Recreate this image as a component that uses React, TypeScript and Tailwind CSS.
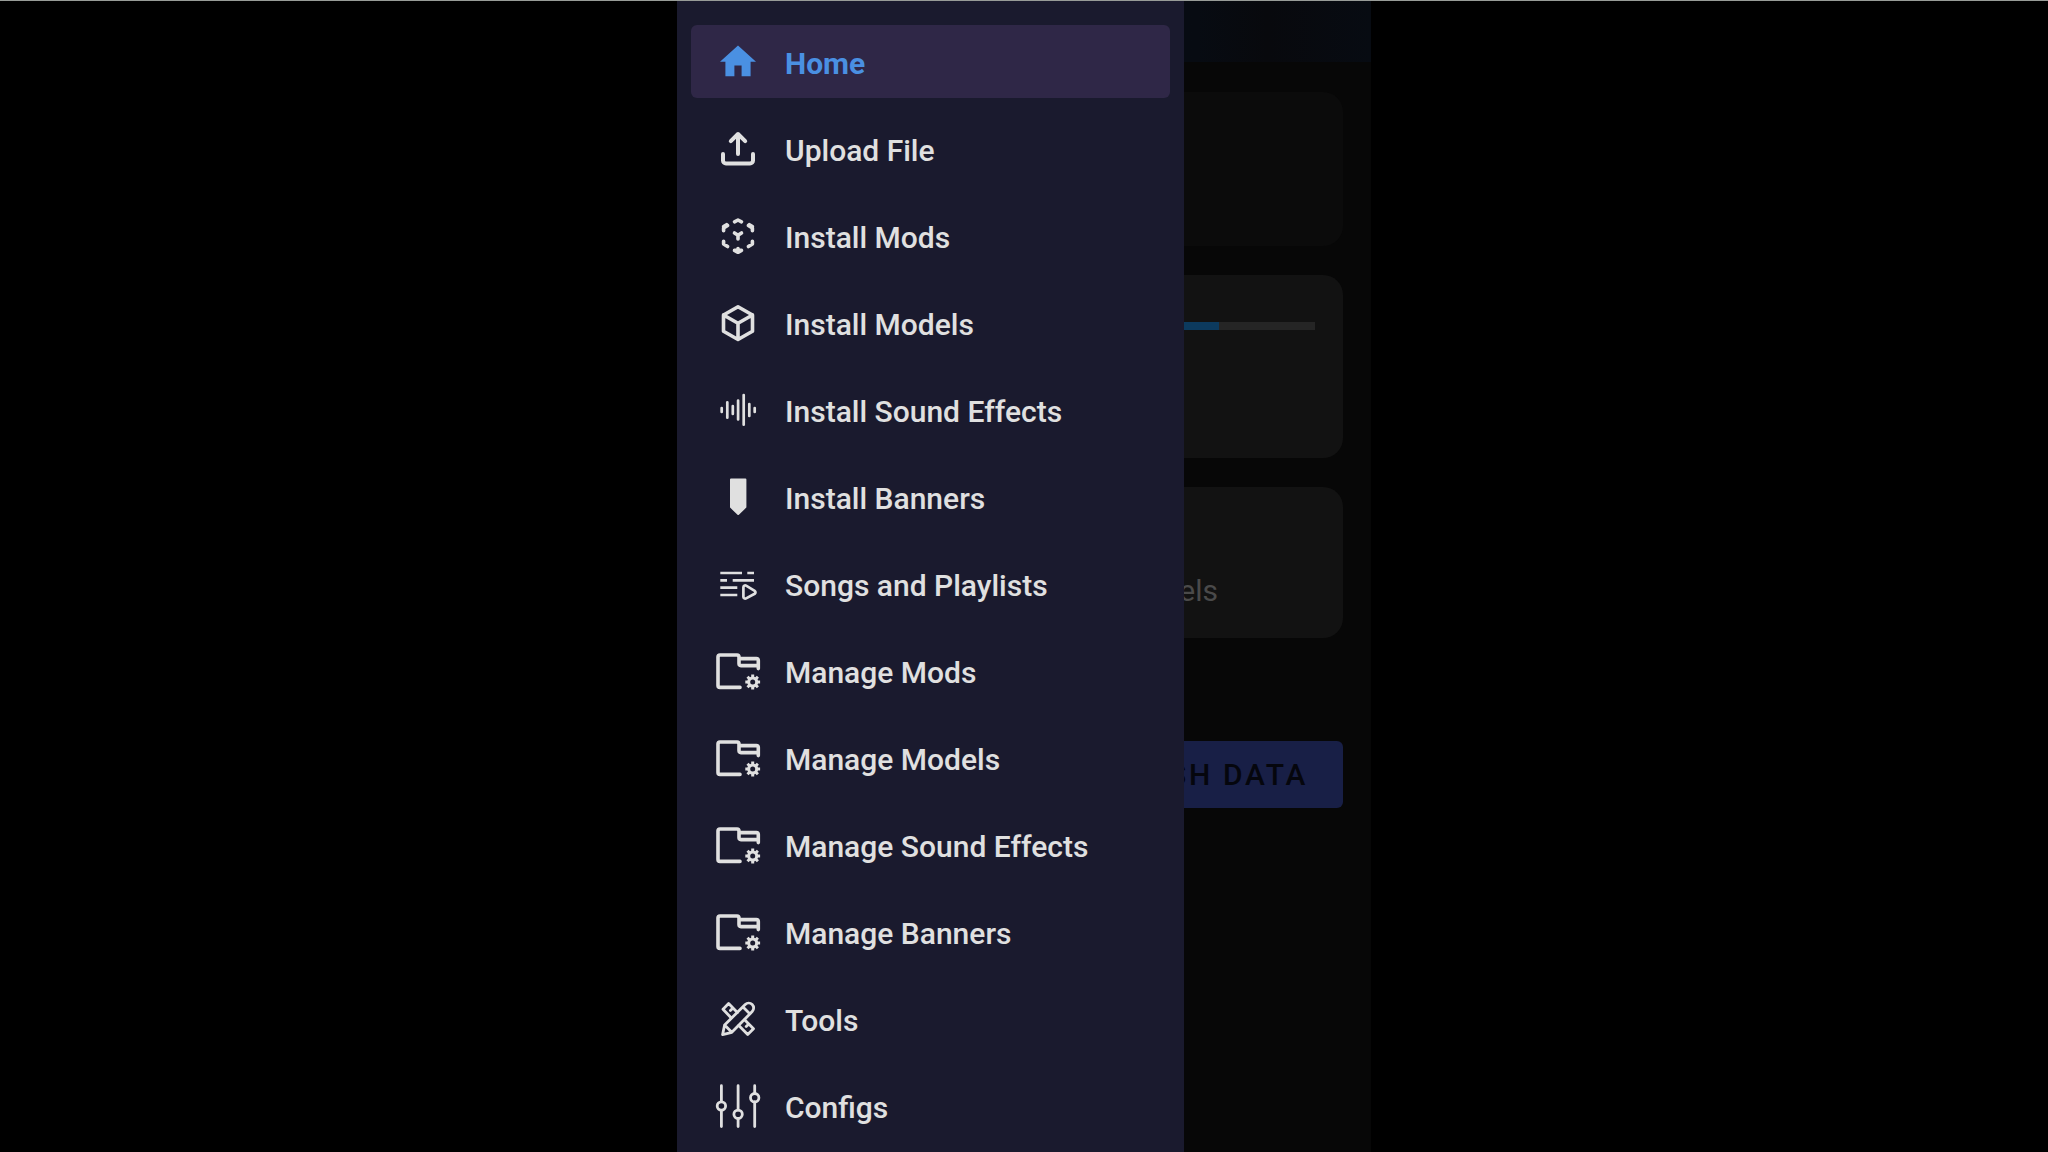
import type { ReactNode } from "react";

function Glyph({ width, children }: { width: number; children: ReactNode }) {
  return (
    <svg
      viewBox="0 0 48 48"
      className="size-12 shrink-0"
      fill="none"
      stroke="currentColor"
      strokeWidth={width}
      strokeLinecap="round"
      strokeLinejoin="round"
      aria-hidden="true"
    >
      {children}
    </svg>
  );
}

const HomeIcon = () => (
  <Glyph width={0}>
    <path
      d="M10 20v-6h4v6h5v-8h3L12 3 2 12h3v8z"
      transform="translate(2.4 2.2) scale(1.8)"
      fill="currentColor"
    />
  </Glyph>
);

const UploadIcon = () => (
  <Glyph width={4}>
    <path d="M24 9v20M16.8 16.2 24 9l7.2 7.2M9 29v6.5a3 3 0 0 0 3 3h24a3 3 0 0 0 3-3V29" />
  </Glyph>
);

const DashedCubeIcon = () => (
  <Glyph width={3.6}>
    <path d="M20.5 9.8 24 8l3.5 1.8M9.6 18.8V16l4-2.6M9.6 14.5l3-1.8M38.4 18.8V16l-4-2.6M38.4 14.5l-3-1.8M9.6 29.2V32l4 2.6M38.4 29.2V32l-4 2.6M20.5 38.4 24 40.3l3.5-1.9zM24 36.5v3M20.5 21l3.5 2.2 3.5-2.2M24 23.2V27" />
  </Glyph>
);

const CubeIcon = () => (
  <Glyph width={3.6}>
    <path d="M24 7.8 38.5 16v16.2L24 40.5 9.5 32.2V16zM9.5 16 24 24.3 38.5 16M24 24.3v16.2" />
  </Glyph>
);

const SoundIcon = () => (
  <Glyph width={2.7}>
    <path d="M7.7 22v4M13.3 16.3v15.4M18.8 20v8M24.1 14.5v19M29.7 9v29.7M35.3 18v12M40.7 22v4" />
  </Glyph>
);

const BannerIcon = () => (
  <Glyph width={2}>
    <path d="M17 6.5h14.4v27.6L24.2 41 17 34.1z" fill="currentColor" />
  </Glyph>
);

const PlaylistIcon = () => (
  <Glyph width={2.7}>
    <g strokeLinecap="butt">
      <path d="M6.3 13H28M33.3 13H40M6.3 20.3H13M18.7 20.3H40M6.3 27.7h17M6.3 35h17" />
    </g>
    <path d="M29.4 27.2a1.8 1.8 0 0 1 2.7-1.5l8.6 5.1a1.8 1.8 0 0 1 0 3l-8.6 4.6a1.8 1.8 0 0 1-2.7-1.5z" />
  </Glyph>
);

const FolderGearIcon = () => (
  <Glyph width={3.6}>
    <path d="M26 40.4H6a2 2 0 0 1-2-2V10a2 2 0 0 1 2-2h17a2 2 0 0 1 2 2v6.6a2 2 0 0 0 2 2h17M25 11.6h17.3a2 2 0 0 1 2 2v8" />
    <circle cx="38.7" cy="35" r="4" strokeWidth="3" />
    <g strokeWidth="3" strokeLinecap="butt">
      <path d="M38.7 27.6v3M38.7 39.4v3M31.3 35h3M43.1 35h3M33.5 29.8l2 2M41.9 38.2l2 2M43.9 29.8l-2 2M35.5 38.2l-2 2" />
    </g>
  </Glyph>
);

const ToolsIcon = () => (
  <Glyph width={2.8}>
    <path d="M8.6 39.6 10.6 30 31.2 9.6a4.9 4.9 0 0 1 7 7L17.8 37.3zM10.6 30l7.2 7.3M29 12l7 7" />
    <path d="M17.3 23 9 14.2l5.6-5.6 8.8 8.8M30.6 24.8l8.9 9-5.8 5.8-8.9-9" />
    <path d="M18.8 13.2l-2.4 2.4M34.6 29.2l-2.4 2.4" />
  </Glyph>
);

const SlidersIcon = () => (
  <Glyph width={2.8}>
    <path d="M7.4 3.7v16M7.4 28.3v16.3M24.1 3.7V28M24.1 36.6v8M40.7 3.7v7.7M40.7 20v24.6" />
    <circle cx="7.4" cy="24" r="4.2" />
    <circle cx="24.1" cy="32.3" r="4.2" />
    <circle cx="40.7" cy="15.7" r="4.2" />
  </Glyph>
);

const items = [
  { label: "Home", Icon: HomeIcon },
  { label: "Upload File", Icon: UploadIcon },
  { label: "Install Mods", Icon: DashedCubeIcon },
  { label: "Install Models", Icon: CubeIcon },
  { label: "Install Sound Effects", Icon: SoundIcon },
  { label: "Install Banners", Icon: BannerIcon },
  { label: "Songs and Playlists", Icon: PlaylistIcon },
  { label: "Manage Mods", Icon: FolderGearIcon },
  { label: "Manage Models", Icon: FolderGearIcon },
  { label: "Manage Sound Effects", Icon: FolderGearIcon },
  { label: "Manage Banners", Icon: FolderGearIcon },
  { label: "Tools", Icon: ToolsIcon },
  { label: "Configs", Icon: SlidersIcon },
];

function Drawer() {
  return (
    <nav
      aria-label="Main menu"
      className="absolute inset-y-0 left-0 w-[73%] bg-[#1a1a2e] px-3.5 pt-6 pb-2"
    >
      <ul className="flex flex-col gap-3.5">
        {items.map(({ label, Icon }, i) => (
          <li key={label}>
            <a
              href="#"
              aria-current={i === 0 ? "page" : undefined}
              className={
                i === 0
                  ? "flex h-[73px] items-center gap-[23px] rounded-md bg-[#2f2747] px-[23px] text-[30px] font-bold text-[#4a90e2]"
                  : "flex h-[73px] items-center gap-[23px] rounded-md px-[23px] text-[30px] font-medium text-[#e0e0e0]"
              }
            >
              <Icon />
              <span className="pt-[3px] whitespace-nowrap">{label}</span>
            </a>
          </li>
        ))}
      </ul>
    </nav>
  );
}

function Dashboard() {
  return (
    <>
      <header className="h-[61px] bg-linear-to-r from-[#070b12] from-75% via-[#08090d] via-85% to-[#070b12]" />
      <main className="flex flex-col gap-[29px] px-7 pt-[30px]">
        <section className="h-[154px] rounded-[20px] bg-[#0b0b0b]" />
        <section className="h-[183px] rounded-[20px] bg-[#121212] px-7 pt-[47px]">
          <div className="h-2 bg-[#252525]">
            <div className="h-full w-[83.5%] bg-[#0c3a5e]" />
          </div>
        </section>
        <section className="flex h-[151px] justify-end rounded-[20px] bg-[#121212] pt-[83px] pr-[125px]">
          <p className="text-[30px] leading-[42px] text-[#4a4a4a]">Models</p>
        </section>
        <button
          type="button"
          className="mt-[74px] h-[67px] self-end rounded-md bg-[#181f46] px-[35px] text-[30px] font-medium tracking-[0.09em] text-[#05060d]"
        >
          REFRESH DATA
        </button>
      </main>
    </>
  );
}

export default function App() {
  return (
    <div className="flex min-h-screen flex-col border-t border-[#989c98] bg-black font-[Roboto,sans-serif]">
      <div className="relative mx-auto w-full max-w-[694px] flex-1 bg-[#070707]">
        <Dashboard />
        <Drawer />
      </div>
    </div>
  );
}
